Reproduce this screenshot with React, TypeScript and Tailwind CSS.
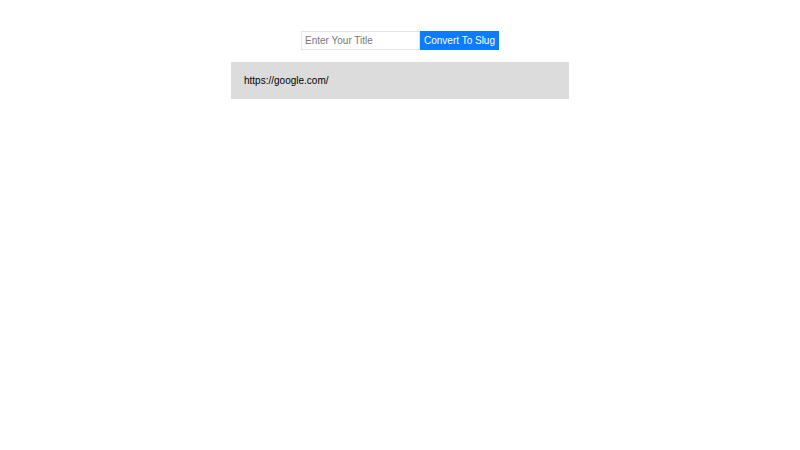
import { useState } from 'react'

export default function App() {
  const [title, setTitle] = useState('')
  const [slug] = useState('https://google.com/')

  return (
    <div className="min-h-[450px] w-full bg-white flex flex-col items-center pt-[31px] font-['Liberation_Sans',Arial,sans-serif]">
      <div className="flex items-stretch">
        <input
          value={title}
          onChange={(e) => setTitle(e.target.value)}
          placeholder="Enter Your Title"
          className="w-[119px] h-[19px] border border-[#e4e4e4] px-[3px] text-[10px] text-black placeholder:text-[#777777] outline-none"
        />
        <button type="button" className="h-[19px] px-[4px] bg-[#0c7bfd] text-white text-[10px] leading-none">
          Convert To Slug
        </button>
      </div>
      <div className="mt-[12px] w-[338px] h-[37px] bg-[#dcdcdc] pl-[13px] flex items-center text-[10px] text-black">
        {slug}
      </div>
    </div>
  )
}
